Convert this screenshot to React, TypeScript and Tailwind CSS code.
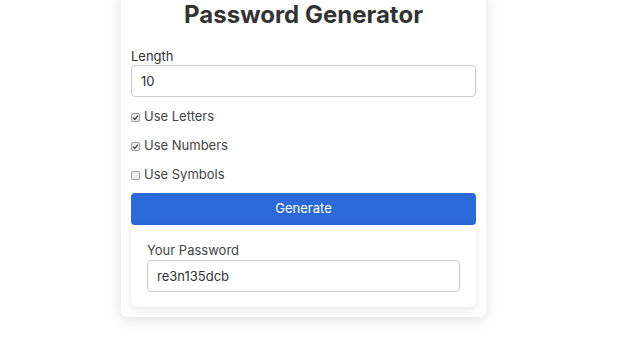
import { useState } from "react";

function Check({ checked }: { checked: boolean }) {
  return (
    <span className="flex h-[9px] w-[9px] items-center justify-center rounded-[2px] border border-[#9a9a9a] bg-[#f0f0f0]">
      {checked && (
        <svg viewBox="0 0 10 10" className="h-[7px] w-[7px]">
          <path d="M1.5 5.2 L4 7.6 L8.6 2.2" fill="none" stroke="#333" strokeWidth="1.8" />
        </svg>
      )}
    </span>
  );
}

export default function App() {
  const [length] = useState("10");
  const options = [
    { label: "Use Letters", checked: true },
    { label: "Use Numbers", checked: true },
    { label: "Use Symbols", checked: false },
  ];

  return (
    <div className="min-h-[361px] bg-white pl-[121px] font-['Inter',sans-serif] text-[#333]">
      {/* Main card */}
      <div className="-mt-[10px] w-[365px] rounded-[6px] bg-white px-[10px] pb-[10px] pt-[10px] shadow-[0_3px_14px_rgba(0,0,0,0.12)]">
        <h1 className="text-center text-[24px] font-bold leading-[29px] text-[#333]">
          Password Generator
        </h1>

        <div className="mt-[18px] text-[13px] leading-[18px] text-[#333]">Length</div>
        <input
          value={length}
          readOnly
          className="block h-[32px] w-full rounded-[4px] border border-[#ccc] px-[9px] text-[13px] text-[#333] outline-none"
        />

        <div className="mt-[10px] flex flex-col gap-[9px]">
          {options.map((o) => (
            <label key={o.label} className="flex h-[20px] items-center gap-[4px] text-[13px] text-[#444]">
              <Check checked={o.checked} />
              <span>{o.label}</span>
            </label>
          ))}
        </div>

        <button className="mt-[8px] block h-[32px] w-full rounded-[4px] bg-[#2b69d8] text-[13px] text-white">
          Generate
        </button>

        {/* Result card */}
        <div className="rounded-b-[6px] bg-white px-[16px] pb-[15px] pt-[16px] shadow-[0_2px_8px_rgba(0,0,0,0.1)]">
          <div className="text-[13px] leading-[18px] text-[#444]">Your Password</div>
          <input
            value="re3n135dcb"
            readOnly
            className="mt-[1px] block h-[32px] w-full rounded-[4px] border border-[#ccc] px-[9px] text-[13px] text-[#333] outline-none"
          />
        </div>
      </div>
    </div>
  );
}
